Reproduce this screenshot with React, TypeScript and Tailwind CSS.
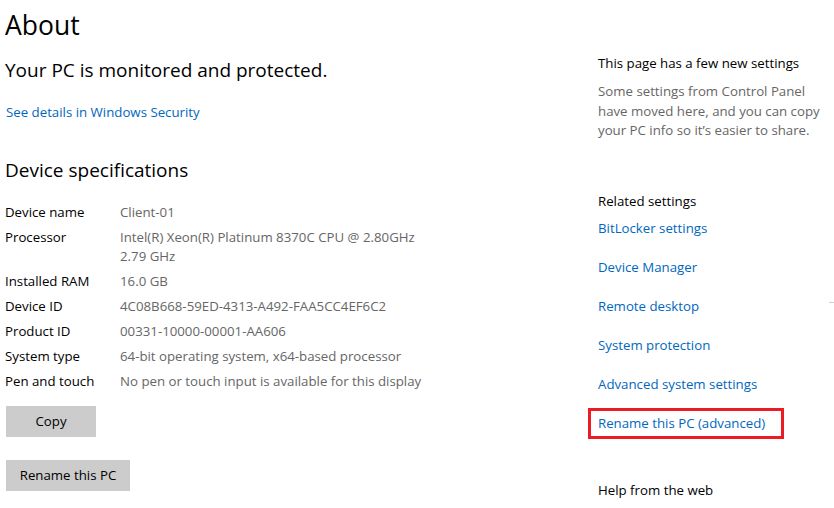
const specs: { label: string; value: string[] }[] = [
  { label: 'Device name', value: ['Client-01'] },
  { label: 'Processor', value: ['Intel(R) Xeon(R) Platinum 8370C CPU @ 2.80GHz', '2.79 GHz'] },
  { label: 'Installed RAM', value: ['16.0 GB'] },
  { label: 'Device ID', value: ['4C08B668-59ED-4313-A492-FAA5CC4EF6C2'] },
  { label: 'Product ID', value: ['00331-10000-00001-AA606'] },
  { label: 'System type', value: ['64-bit operating system, x64-based processor'] },
  { label: 'Pen and touch', value: ['No pen or touch input is available for this display'] },
];

const related = [
  'BitLocker settings',
  'Device Manager',
  'Remote desktop',
  'System protection',
  'Advanced system settings',
];

export default function App() {
  return (
    <div
      className="relative flex h-[508px] w-[834px] overflow-hidden bg-white text-black"
      style={{ fontFamily: '"Open Sans", sans-serif' }}
    >
      {/* Left column */}
      <div className="flex w-[598px] flex-col items-start pl-[5px] pt-[7px]">
        <h1 className="text-[26.5px] leading-[36px] font-normal">About</h1>
        <p className="mt-[14px] text-[19px] leading-[26px]">Your PC is monitored and protected.</p>
        <a className="mt-[19px] ml-[1px] text-[13.25px] leading-[20px] text-[#0067c0]">See details in Windows Security</a>
        <h2 className="mt-[35px] text-[19px] leading-[26px] font-normal">Device specifications</h2>
        <div className="mt-[17px] flex flex-col">
          {specs.map((s) => (
            <div key={s.label} className="flex py-[3px] text-[13.25px] leading-[19px]">
              <div className="w-[115px] shrink-0">{s.label}</div>
              <div className="flex flex-col text-[#666666]">
                {s.value.map((v) => (
                  <span key={v}>{v}</span>
                ))}
              </div>
            </div>
          ))}
        </div>
        <button className="mt-[12px] ml-[1px] flex h-[31px] w-[90px] items-center justify-center bg-[#cccccc] text-[13.25px]">
          Copy
        </button>
        <button className="mt-[23px] ml-[1px] flex h-[31px] w-[124px] items-center justify-center bg-[#cccccc] text-[13.25px]">
          Rename this PC
        </button>
      </div>

      {/* Right column */}
      <div className="flex flex-1 flex-col items-start pt-[53px] text-[13.25px]">
        <p className="leading-[20px]">This page has a few new settings</p>
        <p className="mt-[9px] leading-[19.5px] text-[#666666]">
          Some settings from Control Panel
          <br />
          have moved here, and you can copy
          <br />
          your PC info so it’s easier to share.
        </p>
        <p className="mt-[50px] leading-[20px]">Related settings</p>
        <div className="mt-[7px] flex flex-col items-start gap-[19px]">
          {related.map((r) => (
            <a key={r} className="leading-[20px] text-[#0067c0]">
              {r}
            </a>
          ))}
          <div className="relative">
            <a className="leading-[20px] text-[#0067c0]">Rename this PC (advanced)</a>
            <div className="absolute left-[-10px] top-[-5px] h-[31px] w-[196px] border-[3px] border-[#ed1c24]" />
          </div>
        </div>
        <p className="mt-[47px] leading-[20px]">Help from the web</p>
      </div>

      <div className="absolute left-[829px] top-[302px] h-px w-[5px] bg-[#d0d0d0]" />
    </div>
  );
}
